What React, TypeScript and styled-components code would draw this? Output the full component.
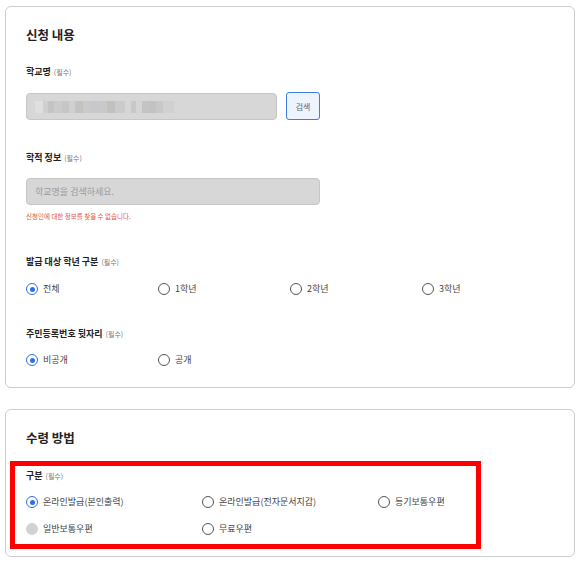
import styled, { createGlobalStyle } from "styled-components";

const GlobalStyle = createGlobalStyle`
  body {
    margin: 0;
    background: #ffffff;
    font-family: "Noto Sans CJK KR", "Noto Sans", sans-serif;
    color: #222;
  }
  * { box-sizing: border-box; }
`;

const Page = styled.div`
  padding: 6px 0 0 5px;
  width: 575px;
  display: flex;
  flex-direction: column;
  gap: 21px;
`;

const Card = styled.section<{ $bottom: number }>`
  border: 1px solid #cdcdcd;
  border-radius: 6px;
  padding: 19px 20px ${(p) => p.$bottom}px 20px;
  display: flex;
  flex-direction: column;
`;

const CardTitle = styled.h2`
  margin: 0;
  font-size: 12.5px;
  line-height: 18px;
  height: 18px;
  font-weight: 700;
  color: #222;
`;

const Field = styled.div<{ $top: number }>`
  margin-top: ${(p) => p.$top}px;
  display: flex;
  flex-direction: column;
`;

const Label = styled.div<{ $gap?: number }>`
  display: flex;
  align-items: baseline;
  height: 14px;
  font-size: 9px;
  line-height: 14px;
  font-weight: 700;
  color: #222;
  margin-bottom: ${(p) => p.$gap ?? 13}px;
`;

const Required = styled.span`
  font-size: 7px;
  line-height: 14px;
  font-weight: 400;
  color: #777;
  margin-left: 3px;
`;

const InputRow = styled.div`
  display: flex;
  align-items: flex-start;
  gap: 9px;
`;

const Input = styled.div<{ $width: number }>`
  width: ${(p) => p.$width}px;
  height: 27px;
  background: #d7d7d7;
  border: 1px solid #c6c6c6;
  border-radius: 4px;
  display: flex;
  align-items: center;
  padding: 0 8px;
  font-size: 9px;
  color: #9a9a9a;
`;

const Mosaic = styled.span`
  display: block;
  width: 139px;
  height: 12px;
  background:
    linear-gradient(
      90deg,
      #e0e0e0 0 8px, #cfcfcf 8px 13px, #c4c4c4 13px 19px, #cbcbcb 19px 27px,
      #c6c6c6 27px 34px, #d0d0d0 34px 40px, #c2c2c2 40px 48px, #cacaca 48px 56px,
      #c5c8cc 56px 64px, #c9c9c9 64px 72px, #c0c0c0 72px 80px, #cbcbcb 80px 90px,
      #d6d6d6 90px 96px, #c8c8c8 96px 101px, #d5d5d5 101px 107px, #c3c3c3 107px 114px,
      #bfc2c6 114px 121px, #c8c8c8 121px 128px, #d1d1d1 128px 139px
    ),
    #d0d0d0;
  background-size: 100% 6px;
  background-repeat: repeat-y;
  filter: blur(0.4px);
  opacity: 0.95;
`;

const SearchButton = styled.button`
  width: 34px;
  height: 28px;
  margin-top: -1px;
  border: 1px solid #3c7de6;
  border-radius: 3px;
  background: #eef4fe;
  color: #666;
  font-family: inherit;
  font-size: 8px;
  padding: 0;
`;

const ErrorText = styled.div`
  margin-top: 6px;
  font-size: 6.5px;
  line-height: 10px;
  height: 10px;
  color: #e2534b;
`;

const RadioGrid = styled.div<{ $col: number; $count: number }>`
  display: grid;
  grid-template-columns: repeat(${(p) => p.$count}, ${(p) => p.$col}px);
  row-gap: 13px;
`;

const RadioItem = styled.label`
  display: flex;
  align-items: center;
  gap: 5px;
  height: 14px;
  font-size: 9px;
  line-height: 14px;
  color: #444;
  white-space: nowrap;
`;

const Circle = styled.span<{ $checked?: boolean; $disabled?: boolean }>`
  width: 12px;
  height: 12px;
  border-radius: 50%;
  flex: none;
  display: flex;
  align-items: center;
  justify-content: center;
  border: 1px solid
    ${(p) => (p.$disabled ? "#d2d2d2" : p.$checked ? "#2f6fe4" : "#555")};
  background: ${(p) => (p.$disabled ? "#d2d2d2" : "#fff")};
  &::after {
    content: "";
    width: 5px;
    height: 5px;
    border-radius: 50%;
    background: #2f6fe4;
    display: ${(p) => (p.$checked ? "block" : "none")};
  }
`;

const Highlight = styled.div`
  margin: 14px 0 0 -16px;
  width: 471px;
  border: 5px solid #ff0000;
  padding: 3px 11px 8px 11px;
  display: flex;
  flex-direction: column;
`;

function Radio({
  label,
  checked,
  disabled,
}: {
  label: string;
  checked?: boolean;
  disabled?: boolean;
}) {
  return (
    <RadioItem>
      <Circle $checked={checked} $disabled={disabled} />
      {label}
    </RadioItem>
  );
}

export default function App() {
  return (
    <>
      <GlobalStyle />
      <Page>
        <Card $bottom={20}>
          <CardTitle>신청 내용</CardTitle>

          <Field $top={21}>
            <Label $gap={14}>
              학교명<Required>(필수)</Required>
            </Label>
            <InputRow>
              <Input $width={251}>
                <Mosaic />
              </Input>
              <SearchButton>검색</SearchButton>
            </InputRow>
          </Field>

          <Field $top={31}>
            <Label>
              학적 정보<Required>(필수)</Required>
            </Label>
            <Input $width={294}>학교명을 검색하세요.</Input>
            <ErrorText>신청인에 대한 정보를 찾을 수 없습니다.</ErrorText>
          </Field>

          <Field $top={34}>
            <Label>
              발급 대상 학년 구분<Required>(필수)</Required>
            </Label>
            <RadioGrid $col={132} $count={4}>
              <Radio label="전체" checked />
              <Radio label="1학년" />
              <Radio label="2학년" />
              <Radio label="3학년" />
            </RadioGrid>
          </Field>

          <Field $top={31}>
            <Label $gap={12}>
              주민등록번호 뒷자리<Required>(필수)</Required>
            </Label>
            <RadioGrid $col={132} $count={4}>
              <Radio label="비공개" checked />
              <Radio label="공개" />
            </RadioGrid>
          </Field>
        </Card>

        <Card $bottom={7}>
          <CardTitle>수령 방법</CardTitle>
          <Highlight>
            <Label $gap={12}>
              구분<Required>(필수)</Required>
            </Label>
            <RadioGrid $col={176} $count={3}>
              <Radio label="온라인발급(본인출력)" checked />
              <Radio label="온라인발급(전자문서지갑)" />
              <Radio label="등기보통우편" />
              <Radio label="일반보통우편" disabled />
              <Radio label="무료우편" />
            </RadioGrid>
          </Highlight>
        </Card>
      </Page>
    </>
  );
}
